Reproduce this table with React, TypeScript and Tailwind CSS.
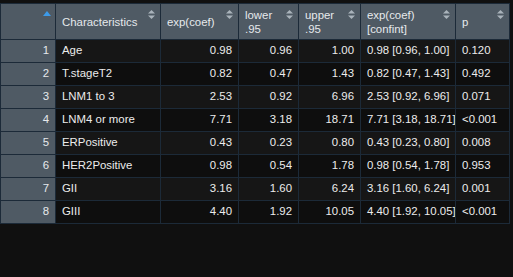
import React from "react";

const rows = [
  ["1", "Age", "0.98", "0.96", "1.00", "0.98 [0.96, 1.00]", "0.120"],
  ["2", "T.stageT2", "0.82", "0.47", "1.43", "0.82 [0.47, 1.43]", "0.492"],
  ["3", "LNM1 to 3", "2.53", "0.92", "6.96", "2.53 [0.92, 6.96]", "0.071"],
  ["4", "LNM4 or more", "7.71", "3.18", "18.71", "7.71 [3.18, 18.71]", "<0.001"],
  ["5", "ERPositive", "0.43", "0.23", "0.80", "0.43 [0.23, 0.80]", "0.008"],
  ["6", "HER2Positive", "0.98", "0.54", "1.78", "0.98 [0.54, 1.78]", "0.953"],
  ["7", "GII", "3.16", "1.60", "6.24", "3.16 [1.60, 6.24]", "0.001"],
  ["8", "GIII", "4.40", "1.92", "10.05", "4.40 [1.92, 10.05]", "<0.001"],
];

const widths = ["w-[55px]", "w-[105px]", "w-[78px]", "w-[60px]", "w-[62px]", "w-[95px]", "w-[54px]"];

function SortIcon() {
  return (
    <svg width="7" height="9" viewBox="0 0 7 9" className="absolute right-[5px] top-[6px]">
      <path d="M3.5 0 L7 3.5 L0 3.5 Z" fill="#aab3bb" />
      <path d="M0 5.5 L7 5.5 L3.5 9 Z" fill="#aab3bb" />
    </svg>
  );
}

export default function App() {
  const headers = [["Characteristics"], ["exp(coef)"], ["lower", ".95"], ["upper", ".95"], ["exp(coef)", "[confint]"], ["p"]];
  return (
    <div
      className="w-[513px] h-[277px] bg-[#101010] pt-[3px] text-[11.4px] text-[#ececec] whitespace-nowrap"
      style={{ fontFamily: '"Liberation Sans", Arial, sans-serif' }}
    >
      <div className="w-[510px] border-l border-[#1c2a38]">
        <div className="flex h-[37px] bg-[#4f5a64] border-t border-b border-[#1c2a38]">
          <div className={`${widths[0]} relative border-r border-[#1c2a38] shrink-0`}>
            <svg width="8" height="5" viewBox="0 0 8 5" className="absolute right-[4px] top-[7px]">
              <path d="M4 0 L8 5 L0 5 Z" fill="#3d9ae8" />
            </svg>
          </div>
          {headers.map((h, i) => (
            <div
              key={i}
              className={`${widths[i + 1]} relative border-r border-[#1c2a38] shrink-0 flex flex-col justify-center pl-[6px] leading-[14px] text-[#e6e9ec]`}
            >
              {h.map((t, j) => (
                <div key={j}>{t}</div>
              ))}
              <SortIcon />
            </div>
          ))}
        </div>
        {rows.map((r, ri) => (
          <div
            key={ri}
            className={`flex h-[23px] border-b border-[#1c2a38] ${ri % 2 === 0 ? "bg-[#161616]" : "bg-[#0e0e0e]"}`}
          >
            {r.map((c, ci) => {
              const right = ci === 0 || (ci >= 2 && ci <= 4);
              return (
                <div
                  key={ci}
                  className={`${widths[ci]} shrink-0 border-r border-[#1c2a38] flex items-center overflow-hidden ${
                    right ? "justify-end pr-[6px]" : "pl-[6px]"
                  } ${ci === 0 ? "bg-[#4f5a64] text-[#e6e9ec]" : ""}`}
                >
                  {c}
                </div>
              );
            })}
          </div>
        ))}
      </div>
    </div>
  );
}
